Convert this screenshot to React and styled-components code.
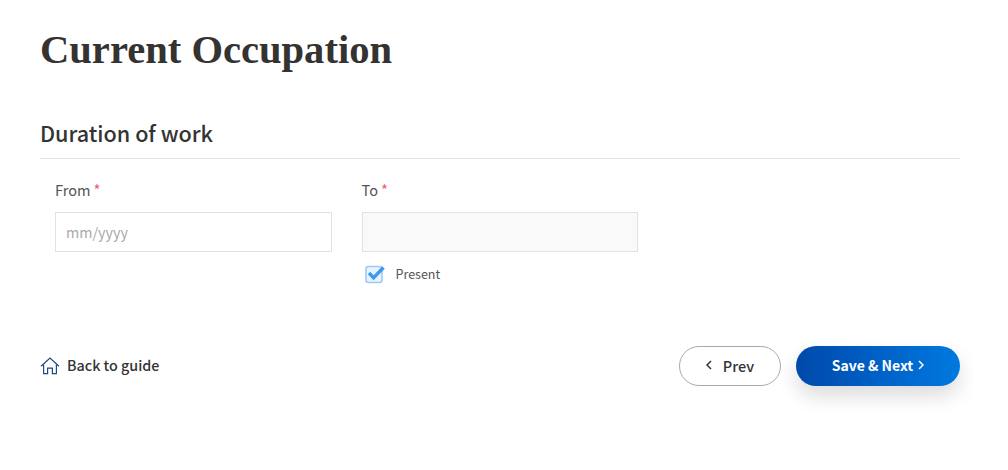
import styled, { createGlobalStyle } from 'styled-components';

const GlobalStyle = createGlobalStyle`
  html, body {
    margin: 0;
    padding: 0;
    background: #ffffff;
  }
  body {
    font-family: 'Noto Sans CJK KR', 'Noto Sans', sans-serif;
    color: #333333;
  }
`;

const Page = styled.div`
  width: 1008px;
  height: 470px;
  box-sizing: border-box;
  padding: 27px 48px 0 40px;
  overflow: hidden;
`;

const Title = styled.h1`
  margin: 0;
  font-family: 'Liberation Serif', 'DejaVu Serif', serif;
  font-size: 40.6px;
  line-height: 46px;
  font-weight: 700;
  color: #353232;
`;

const SectionTitle = styled.h2`
  margin: 40px 0 0;
  padding-top: 1px;
  padding-bottom: 6px;
  border-bottom: 1px solid #e2e2e2;
  font-size: 21.6px;
  line-height: 38px;
  font-weight: 500;
  color: #333333;
`;

const Fields = styled.div`
  display: flex;
  gap: 30px;
  padding: 20px 0 0 15px;
`;

const Field = styled.div`
  width: 276.5px;
`;

const Label = styled.label`
  display: block;
  height: 33px;
  font-size: 14.6px;
  line-height: 22px;
  color: #555555;
`;

const Required = styled.span`
  margin-left: 3px;
  font-size: 15px;
  color: #f0606c;
`;

const Input = styled.input`
  display: block;
  width: 100%;
  height: 40px;
  box-sizing: border-box;
  padding: 0 10px 2px;
  border: 1px solid #e2e2e2;
  border-radius: 0;
  outline: none;
  font-family: inherit;
  font-size: 14.3px;
  color: #333333;
  background: ${(props) => (props.disabled ? '#f9f9f9' : '#ffffff')};

  &::placeholder {
    color: #aaaaaa;
    opacity: 1;
  }
`;

const CheckRow = styled.label`
  display: flex;
  align-items: center;
  gap: 11px;
  margin-top: 12px;
  padding-left: 3px;
  font-size: 12.5px;
  line-height: 20px;
  color: #555555;
`;

const Footer = styled.div`
  display: flex;
  align-items: center;
  justify-content: space-between;
  margin-top: 62px;
`;

const BackLink = styled.a`
  display: flex;
  align-items: center;
  gap: 7px;
  font-size: 14.3px;
  font-weight: 500;
  color: #333333;
  text-decoration: none;
`;

const BackText = styled.span`
  padding-bottom: 4px;
`;

const Buttons = styled.div`
  display: flex;
  gap: 15px;
`;

const PrevButton = styled.button`
  display: flex;
  align-items: center;
  justify-content: center;
  gap: 11px;
  width: 102px;
  height: 40px;
  padding: 0 0 2px;
  border: 1px solid #aaaaaa;
  border-radius: 20px;
  background: #ffffff;
  font-family: inherit;
  font-size: 14.5px;
  font-weight: 500;
  color: #333333;
`;

const NextButton = styled.button`
  display: flex;
  align-items: center;
  justify-content: center;
  gap: 5px;
  width: 164px;
  height: 40px;
  padding: 0 0 2px;
  border: none;
  border-radius: 20px;
  background: linear-gradient(90deg, #0049ab, #0079e0);
  box-shadow: 0 10px 20px rgba(0, 0, 0, 0.14);
  font-family: inherit;
  font-size: 14px;
  font-weight: 700;
  color: #ffffff;
`;

const HomeIcon = () => (
  <svg width="20" height="18" viewBox="0 0 20 18" fill="none" stroke="#1f4a80" strokeWidth="1.2">
    <path d="M1 9.2 10 1l9 8.2" />
    <path d="M3.6 7.5v9.2h4v-5.5h4.8v5.5h4V7.5" />
  </svg>
);

const CheckIcon = () => (
  <svg width="20" height="20" viewBox="0 0 20 20" fill="none">
    <rect x="1" y="2.5" width="16" height="16" rx="2.5" fill="#e9f3fd" stroke="#9ccaf5" strokeWidth="1.6" />
    <path d="M4 9l4.6 4.8L18.5 3.5" stroke="#3d9af0" strokeWidth="3.4" />
  </svg>
);

const Chevron = ({ left, color }) => (
  <svg width="6" height="10" viewBox="0 0 6 10" fill="none" stroke={color} strokeWidth="1.5">
    <path d={left ? 'M5 1 1 5l4 4' : 'M1 1l4 4-4 4'} />
  </svg>
);

const App = () => (
  <Page>
    <GlobalStyle />
    <Title>Current Occupation</Title>
    <SectionTitle>Duration of work</SectionTitle>
    <Fields>
      <Field>
        <Label>
          From<Required>*</Required>
        </Label>
        <Input placeholder="mm/yyyy" />
      </Field>
      <Field>
        <Label>
          To<Required>*</Required>
        </Label>
        <Input disabled />
        <CheckRow>
          <CheckIcon />
          Present
        </CheckRow>
      </Field>
    </Fields>
    <Footer>
      <BackLink href="#">
        <HomeIcon />
        <BackText>Back to guide</BackText>
      </BackLink>
      <Buttons>
        <PrevButton>
          <Chevron left color="#333333" />
          Prev
        </PrevButton>
        <NextButton>
          Save &amp; Next
          <Chevron color="#ffffff" />
        </NextButton>
      </Buttons>
    </Footer>
  </Page>
);

export default App;
